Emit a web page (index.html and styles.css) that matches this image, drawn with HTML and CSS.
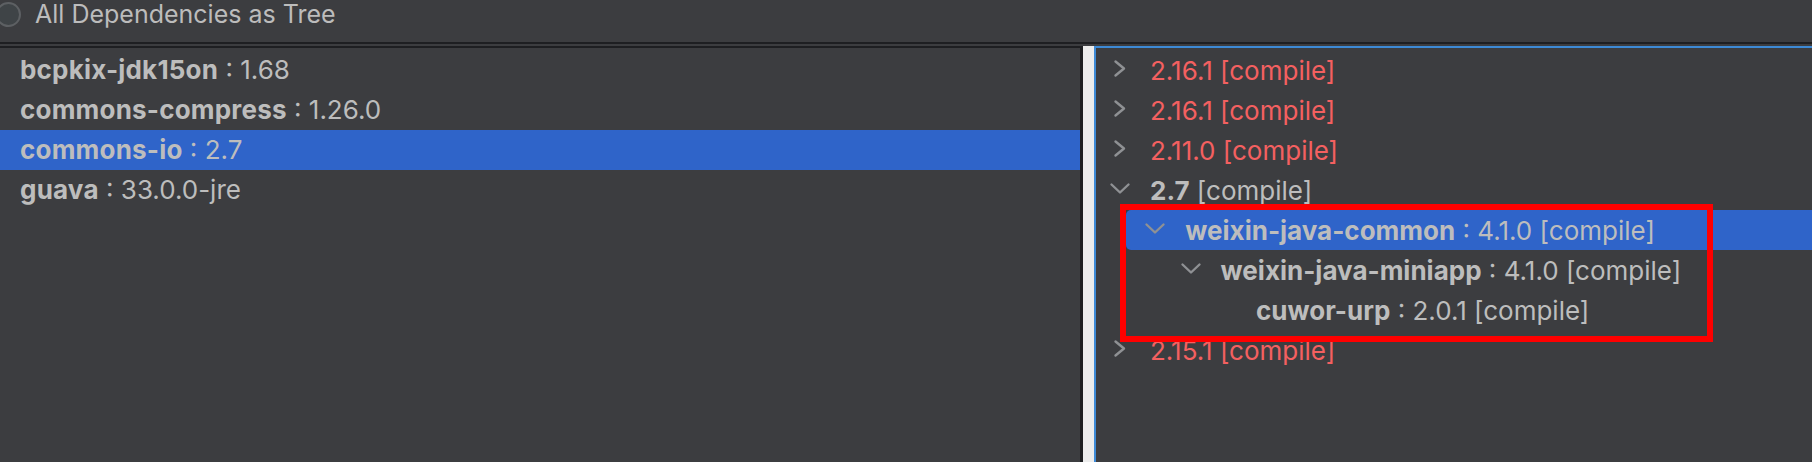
FILE: index.html
```html
<!DOCTYPE html>
<html lang="en">
<head>
    <meta charset="UTF-8">
    <title>Dependency Analyzer</title>
    <link rel="stylesheet" href="styles.css">
</head>
<body>
    <div class="header">
        <span class="radio"></span>
        <span class="header-title">All Dependencies as Tree</span>
    </div>

    <div class="panes">
        <div class="pane-left">
            <div class="dep-row"><b>bcpkix-jdk15on</b> : 1.68</div>
            <div class="dep-row"><b>commons-compress</b> : 1.26.0</div>
            <div class="dep-row selected"><b>commons-io</b> : 2.7</div>
            <div class="dep-row"><b>guava</b> : 33.0.0-jre</div>
        </div>

        <div class="splitter"></div>

        <div class="pane-right">
            <div class="tree-row l1 conflict">
                <svg class="chevron" viewBox="0 0 24 24"><path d="M7.5 3.5 L16 10.5 L7.5 17.5"/></svg>
                <span>2.16.1 [compile]</span>
            </div>
            <div class="tree-row l1 conflict">
                <svg class="chevron" viewBox="0 0 24 24"><path d="M7.5 3.5 L16 10.5 L7.5 17.5"/></svg>
                <span>2.16.1 [compile]</span>
            </div>
            <div class="tree-row l1 conflict">
                <svg class="chevron" viewBox="0 0 24 24"><path d="M7.5 3.5 L16 10.5 L7.5 17.5"/></svg>
                <span>2.11.0 [compile]</span>
            </div>
            <div class="tree-row l1">
                <svg class="chevron" viewBox="0 0 24 24"><path d="M3.5 6.5 L12 14.5 L20.5 6.5"/></svg>
                <span><b>2.7</b> [compile]</span>
            </div>
            <div class="tree-row l2 selected">
                <svg class="chevron" viewBox="0 0 24 24"><path d="M3.5 6.5 L12 14.5 L20.5 6.5"/></svg>
                <span><b>weixin-java-common</b> : 4.1.0 [compile]</span>
            </div>
            <div class="tree-row l3">
                <svg class="chevron" viewBox="0 0 24 24"><path d="M3.5 6.5 L12 14.5 L20.5 6.5"/></svg>
                <span><b>weixin-java-miniapp</b> : 4.1.0 [compile]</span>
            </div>
            <div class="tree-row l4">
                <span class="chevron"></span>
                <span><b>cuwor-urp</b> : 2.0.1 [compile]</span>
            </div>
            <div class="tree-row l1 conflict">
                <svg class="chevron" viewBox="0 0 24 24"><path d="M7.5 3.5 L16 10.5 L7.5 17.5"/></svg>
                <span>2.15.1 [compile]</span>
            </div>

            <div class="highlight-box"></div>
        </div>
    </div>
</body>
</html>
```

FILE: styles.css
```css
body {
    margin: 0;
    height: 462px;
    overflow: hidden;
    background-color: #3c3d40;
    font-family: Inter, "Noto Sans", sans-serif;
    font-size: 26px;
    color: #bdbdbd;
    display: flex;
    flex-direction: column;
}

b { font-weight: 700; }

.header {
    height: 44px;
    display: flex;
    align-items: flex-start;
    border-bottom: 2px solid #1e1f22;
    box-sizing: border-box;
}

.radio {
    width: 25px;
    height: 25px;
    margin: 2px 0 0 -4px;
    border: 2px solid #5d6063;
    border-radius: 50%;
    background-color: #3f4447;
    box-sizing: border-box;
}

.header-title {
    margin-left: 14px;
    font-size: 25px;
    line-height: 28px;
    color: #bcbcbc;
}

.panes {
    flex: 1;
    display: flex;
    margin-top: 2px;
}

.pane-left {
    width: 1080px;
    padding-top: 2px;
    border-top: 2px solid #1e1f22;
    border-right: 3px solid #1e1f22;
}

.dep-row {
    height: 40px;
    line-height: 40px;
    padding-left: 20px;
    white-space: nowrap;
}

.dep-row b { letter-spacing: 0.2px; }

.dep-row.selected { background-color: #2f64c9; }

.splitter {
    width: 11px;
    background-color: #ececec;
}

.pane-right {
    flex: 1;
    position: relative;
    padding-top: 2px;
    border-top: 2px solid #3d8ad6;
    border-left: 2px solid #3d8ad6;
}

.tree-row {
    height: 40px;
    display: flex;
    align-items: center;
    white-space: nowrap;
}

.tree-row.l1 { padding-left: 12px; }
.tree-row.l2 { padding-left: 47.3px; }
.tree-row.l3 { padding-left: 82.6px; }
.tree-row.l4 { padding-left: 118px; }

.tree-row.selected {
    margin-left: 30px;
    padding-left: 17.3px;
    background-color: #2f64c9;
    border-radius: 5px 0 0 5px;
}

.tree-row.conflict { color: #f46060; }

.chevron {
    width: 24px;
    height: 24px;
    margin-right: 18px;
    flex-shrink: 0;
}

.chevron path {
    fill: none;
    stroke: #8f9194;
    stroke-width: 2.4;
    stroke-linecap: round;
    stroke-linejoin: round;
}

/* annotation drawn over the tree */
.highlight-box {
    position: absolute;
    left: 24px;
    top: 156px;
    width: 593px;
    height: 138px;
    border: 6px solid #ff0000;
    box-sizing: border-box;
}
```
